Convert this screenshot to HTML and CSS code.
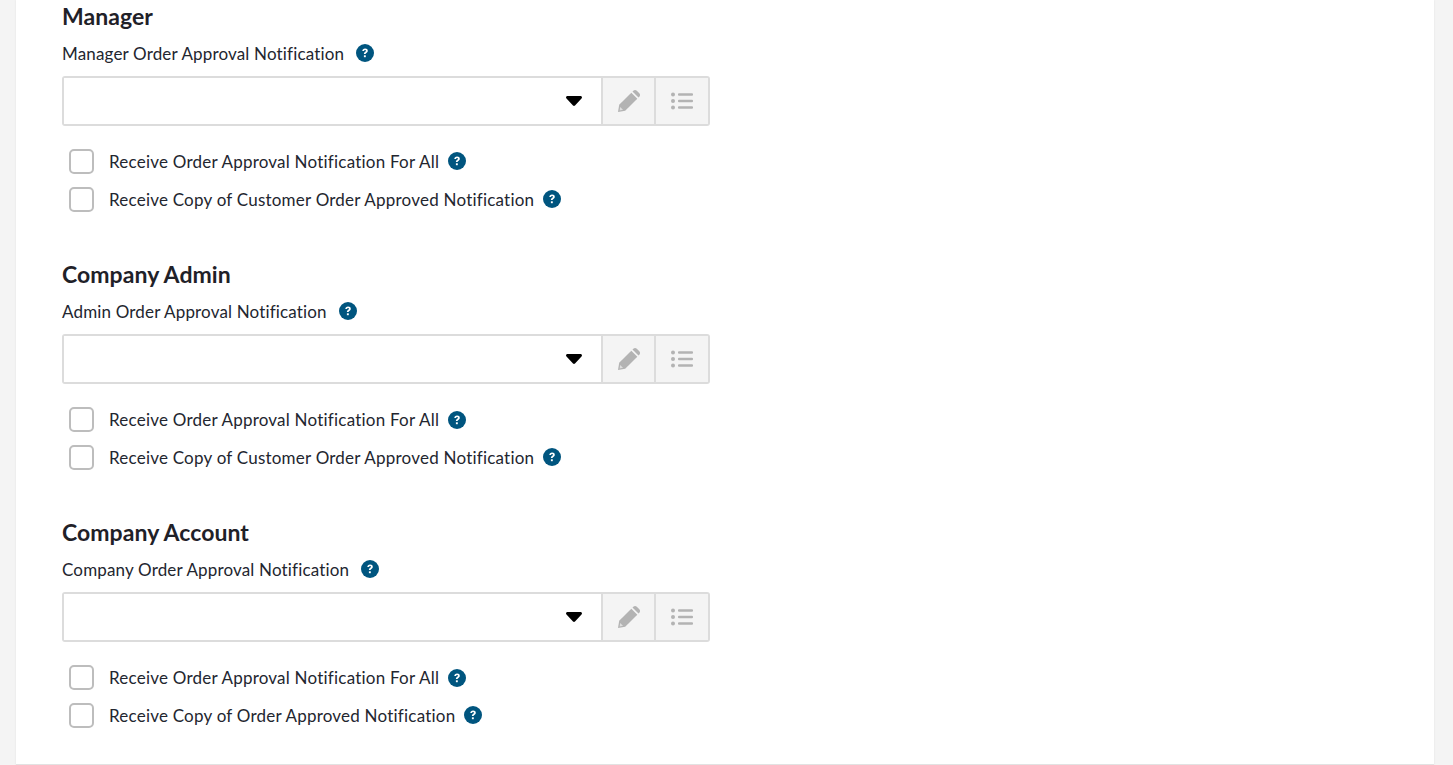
FILE: index.html
```html
<!DOCTYPE html>
<html lang="en">
<head>
    <meta charset="UTF-8">
    <meta name="viewport" content="width=device-width, initial-scale=1.0">
    <title>Order Approval Notifications</title>
    <link rel="stylesheet" href="styles.css">
</head>
<body>
    <svg class="icon-defs" width="0" height="0" aria-hidden="true">
        <symbol id="icon-help" viewBox="0 0 18 18">
            <circle cx="9" cy="9" r="9" fill="#00557f"/>
            <path d="M6.300 7.100c0-1.600 1.200-2.600 2.800-2.600s2.700.9 2.700 2.300c0 1-.5 1.600-1.400 2.100-.6.4-.8.6-.8 1.200H7.900c0-1.200.4-1.800 1.300-2.300.6-.3.8-.6.8-1 0-.5-.4-.8-.9-.8-.6 0-1 .4-1 1.100z" fill="#fff"/>
            <rect x="7.900" y="11.300" width="1.900" height="1.900" fill="#fff"/>
        </symbol>
        <symbol id="icon-caret" viewBox="0 0 16 10">
            <path d="M1.500 0h13c1.300 0 2 1.500 1 2.500L9 9.500c-.6.6-1.400.6-2 0L.5 2.500C-.5 1.500.2 0 1.500 0z" fill="#000"/>
        </symbol>
        <symbol id="icon-pencil" viewBox="0 0 24 24">
            <path d="M1 23l1.200-7.200L14.300 3.700l6 6L8.200 21.800z" fill="#b3b3b3"/>
            <path d="M15.500 2.500l.8-.8c1-1 2.500-1 3.500 0l2.500 2.500c1 1 1 2.500 0 3.500l-.8.800z" fill="#b3b3b3"/>
            <path d="M2.600 21.400l.6-3.400 2.800 2.800z" fill="#dedede"/>
        </symbol>
        <symbol id="icon-list" viewBox="0 0 22 18">
            <circle cx="2" cy="2.500" r="2" fill="#b3b3b3"/>
            <circle cx="2" cy="9" r="2" fill="#b3b3b3"/>
            <circle cx="2" cy="15.500" r="2" fill="#b3b3b3"/>
            <rect x="7" y="1.300" width="15" height="2.400" rx="1" fill="#b3b3b3"/>
            <rect x="7" y="7.800" width="15" height="2.400" rx="1" fill="#b3b3b3"/>
            <rect x="7" y="14.300" width="15" height="2.400" rx="1" fill="#b3b3b3"/>
        </symbol>
    </svg>

    <div class="panel">
        <section class="group">
            <h2>Manager</h2>
            <div class="field-label">Manager Order Approval Notification <svg class="help"><use href="#icon-help"/></svg></div>
            <div class="picker">
                <div class="picker-select"><svg class="caret"><use href="#icon-caret"/></svg></div>
                <button class="picker-btn" type="button"><svg class="pencil"><use href="#icon-pencil"/></svg></button>
                <button class="picker-btn" type="button"><svg class="list"><use href="#icon-list"/></svg></button>
            </div>
            <label class="check"><span class="box"></span>Receive Order Approval Notification For All <svg class="help"><use href="#icon-help"/></svg></label>
            <label class="check"><span class="box"></span>Receive Copy of Customer Order Approved Notification <svg class="help"><use href="#icon-help"/></svg></label>
        </section>
        <section class="group">
            <h2>Company Admin</h2>
            <div class="field-label">Admin Order Approval Notification <svg class="help"><use href="#icon-help"/></svg></div>
            <div class="picker">
                <div class="picker-select"><svg class="caret"><use href="#icon-caret"/></svg></div>
                <button class="picker-btn" type="button"><svg class="pencil"><use href="#icon-pencil"/></svg></button>
                <button class="picker-btn" type="button"><svg class="list"><use href="#icon-list"/></svg></button>
            </div>
            <label class="check"><span class="box"></span>Receive Order Approval Notification For All <svg class="help"><use href="#icon-help"/></svg></label>
            <label class="check"><span class="box"></span>Receive Copy of Customer Order Approved Notification <svg class="help"><use href="#icon-help"/></svg></label>
        </section>
        <section class="group">
            <h2>Company Account</h2>
            <div class="field-label">Company Order Approval Notification <svg class="help"><use href="#icon-help"/></svg></div>
            <div class="picker">
                <div class="picker-select"><svg class="caret"><use href="#icon-caret"/></svg></div>
                <button class="picker-btn" type="button"><svg class="pencil"><use href="#icon-pencil"/></svg></button>
                <button class="picker-btn" type="button"><svg class="list"><use href="#icon-list"/></svg></button>
            </div>
            <label class="check"><span class="box"></span>Receive Order Approval Notification For All <svg class="help"><use href="#icon-help"/></svg></label>
            <label class="check"><span class="box"></span>Receive Copy of Order Approved Notification <svg class="help"><use href="#icon-help"/></svg></label>
        </section>
    </div>
</body>
</html>
```

FILE: styles.css
```css
* {
    box-sizing: border-box;
    margin: 0;
    padding: 0;
}
html, body {
    height: 765px;
    overflow: hidden;
}
body {
    font-family: 'Lato', 'Liberation Sans', sans-serif;
    background-color: #f4f4f4;
    color: #23262f;
    padding: 0 19px 0 16px;
}
.icon-defs {
    display: block;
}
.panel {
    height: 765px;
    padding: 0 46px;
    background-color: white;
    border-bottom: 1px solid #e2e2e2;
    box-shadow: 0 0 2px rgba(0, 0, 0, 0.08);
}
.group {
    height: 258.2px;
    padding-top: 4px;
}
h2 {
    font-size: 23px;
    line-height: 24px;
    font-weight: 700;
    letter-spacing: 0.05px;
    color: #1f2128;
}
.field-label {
    display: flex;
    align-items: center;
    gap: 12px;
    height: 26px;
    margin-top: 12.1px;
    font-size: 17px;
    letter-spacing: 0.16px;
}
.help {
    width: 18px;
    height: 18px;
    flex: none;
}
.picker {
    display: flex;
    width: 648px;
    height: 50px;
    margin-top: 9.9px;
    margin-bottom: 16.7px;
    border: 2px solid #dcdcdc;
    border-radius: 3px;
}
.picker-select {
    flex: 1;
    display: flex;
    align-items: center;
    justify-content: flex-end;
    padding-right: 19px;
    background-color: white;
}
.caret {
    width: 16px;
    height: 10px;
}
.picker-btn {
    display: flex;
    align-items: center;
    justify-content: center;
    width: 53px;
    border: none;
    border-left: 2px solid #dcdcdc;
    background-color: #f4f4f4;
}
.picker-btn:last-child {
    width: 54px;
}
.pencil {
    width: 24px;
    height: 24px;
}
.list {
    width: 22px;
    height: 18px;
}
.check {
    display: flex;
    align-items: center;
    gap: 8.5px;
    height: 37.6px;
    padding-left: 7px;
    font-size: 17px;
    letter-spacing: 0.22px;
}
.box {
    width: 25px;
    height: 25px;
    margin-right: 6.5px;
    border: 2px solid #bdbdbd;
    border-radius: 5px;
    background-color: white;
}
```
